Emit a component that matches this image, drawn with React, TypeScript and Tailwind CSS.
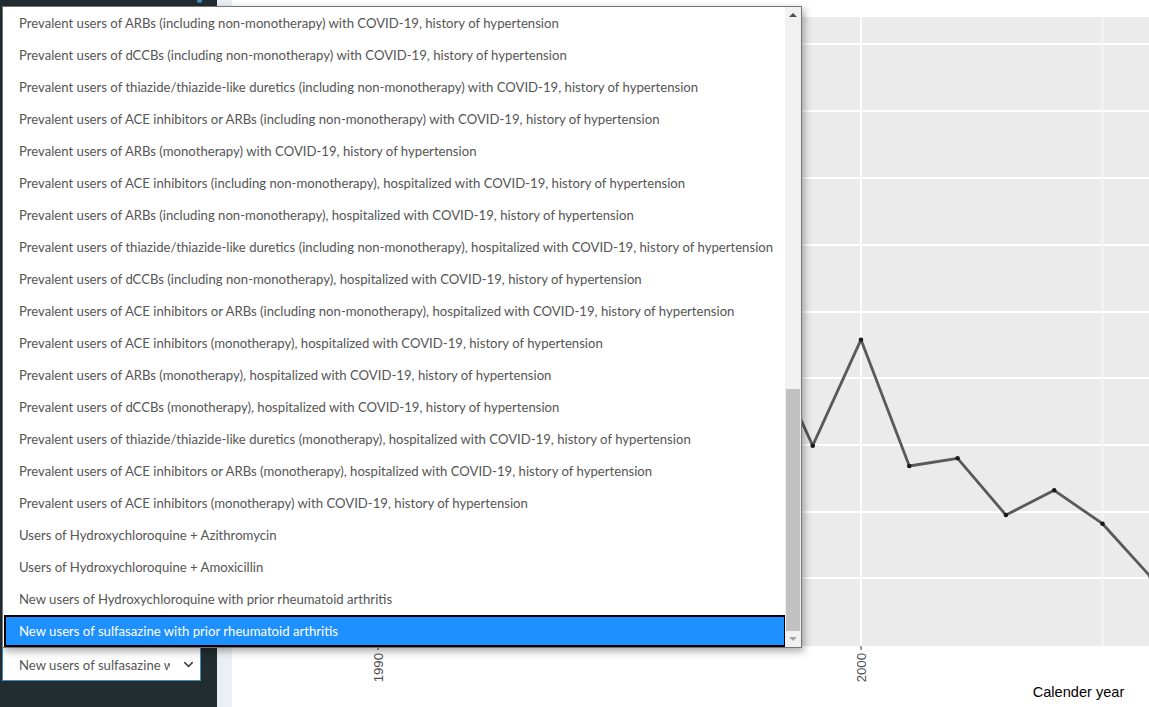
import { ChevronDown } from "lucide-react"

const options = [
  "Prevalent users of ARBs (including non-monotherapy) with COVID-19, history of hypertension",
  "Prevalent users of dCCBs (including non-monotherapy) with COVID-19, history of hypertension",
  "Prevalent users of thiazide/thiazide-like duretics (including non-monotherapy) with COVID-19, history of hypertension",
  "Prevalent users of ACE inhibitors or ARBs (including non-monotherapy) with COVID-19, history of hypertension",
  "Prevalent users of ARBs (monotherapy) with COVID-19, history of hypertension",
  "Prevalent users of ACE inhibitors (including non-monotherapy), hospitalized with COVID-19, history of hypertension",
  "Prevalent users of ARBs (including non-monotherapy), hospitalized with COVID-19, history of hypertension",
  "Prevalent users of thiazide/thiazide-like duretics (including non-monotherapy), hospitalized with COVID-19, history of hypertension",
  "Prevalent users of dCCBs (including non-monotherapy), hospitalized with COVID-19, history of hypertension",
  "Prevalent users of ACE inhibitors or ARBs (including non-monotherapy), hospitalized with COVID-19, history of hypertension",
  "Prevalent users of ACE inhibitors (monotherapy), hospitalized with COVID-19, history of hypertension",
  "Prevalent users of ARBs (monotherapy), hospitalized with COVID-19, history of hypertension",
  "Prevalent users of dCCBs (monotherapy), hospitalized with COVID-19, history of hypertension",
  "Prevalent users of thiazide/thiazide-like duretics (monotherapy), hospitalized with COVID-19, history of hypertension",
  "Prevalent users of ACE inhibitors or ARBs (monotherapy), hospitalized with COVID-19, history of hypertension",
  "Prevalent users of ACE inhibitors (monotherapy) with COVID-19, history of hypertension",
  "Users of Hydroxychloroquine + Azithromycin",
  "Users of Hydroxychloroquine + Amoxicillin",
  "New users of Hydroxychloroquine with prior rheumatoid arthritis",
  "New users of sulfasazine with prior rheumatoid arthritis",
]

// yearly values in page px (y) - only 1998 onward is actually visible
const series: [number, number][] = [
  [1990, 520], [1991, 470], [1992, 430], [1993, 455], [1994, 400], [1995, 380],
  [1996, 360], [1997, 395], [1998, 340], [1999, 445.7], [2000, 339.7], [2001, 466],
  [2002, 458.3], [2003, 515], [2004, 490.3], [2005, 523.7], [2006, 577],
]

const xOf = (year: number) => 861 + (year - 2000) * 48.3

function Chart() {
  const hLines = [44, 111, 178, 245, 312, 378, 445, 512, 578]
  const pts = series.map(([yr, y]) => `${xOf(yr)},${y}`).join(" ")
  return (
    <svg width="917" height="707" viewBox="232 0 917 707" className="block">
      <rect x="300" y="17" width="849" height="629" fill="#ebebeb" />
      {hLines.map((y) => (
        <line key={y} x1="300" x2="1149" y1={y} y2={y} stroke="#ffffff" strokeWidth="2" />
      ))}
      <line x1="619.5" x2="619.5" y1="17" y2="646" stroke="#f5f5f5" strokeWidth="2" />
      <line x1="1102.5" x2="1102.5" y1="17" y2="646" stroke="#f5f5f5" strokeWidth="2" />
      <line x1="378" x2="378" y1="17" y2="646" stroke="#ffffff" strokeWidth="2" />
      <line x1="861" x2="861" y1="17" y2="646" stroke="#ffffff" strokeWidth="2" />
      <polyline points={pts} fill="none" stroke="#595959" strokeWidth="2.8" strokeLinejoin="round" />
      {series.map(([yr, y]) => (
        <circle key={yr} cx={xOf(yr)} cy={y} r="2.3" fill="#1a1a1a" />
      ))}
      {[1990, 2000].map((yr) => (
        <g key={yr}>
          <line x1={xOf(yr)} x2={xOf(yr)} y1="646" y2="650" stroke="#333333" strokeWidth="1" />
          <text
            x={xOf(yr)}
            y="653"
            transform={`rotate(-90 ${xOf(yr)} 653)`}
            textAnchor="end"
            dominantBaseline="central"
            fontSize="13.2"
            fill="#4d4d4d"
            fontFamily="'Liberation Sans', Arial, sans-serif"
          >
            {yr}
          </text>
        </g>
      ))}
      <text x="1078.5" y="697" textAnchor="middle" fontSize="14.6" fill="#000000" fontFamily="'Liberation Sans', Arial, sans-serif">
        Calender year
      </text>
    </svg>
  )
}

function Listbox() {
  return (
    <div className="absolute left-[2px] top-[6px] w-[800px] h-[642px] flex bg-white border border-[#767676] shadow-[2px_3px_8px_rgba(0,0,0,0.35)]">
      <div className="flex-1 overflow-hidden">
        {options.map((opt, i) => {
          const selected = i === options.length - 1
          return (
            <div
              key={opt}
              className={
                selected
                  ? "h-[32px] flex items-center pt-[2px] pl-[13px] ml-px mr-[-1px] whitespace-nowrap bg-[#1e90ff] text-white border-2 border-black"
                  : "h-[32px] flex items-center pt-[2px] pl-[16px] whitespace-nowrap text-[#555555]"
              }
            >
              {opt}
            </div>
          )
        })}
      </div>
      <div className="w-[16px] bg-[#f1f1f1] flex flex-col items-center">
        <div className="h-[16px] flex items-center justify-center">
          <div className="w-0 h-0 border-l-[4px] border-r-[4px] border-b-[4px] border-l-transparent border-r-transparent border-b-[#505050]" />
        </div>
        <div className="flex-1 w-full flex flex-col justify-end px-[1px]">
          <div className="h-[242px] bg-[#c1c1c1]" />
        </div>
        <div className="h-[16px] flex items-center justify-center">
          <div className="w-0 h-0 border-l-[4px] border-r-[4px] border-t-[4px] border-l-transparent border-r-transparent border-t-[#a3a3a3]" />
        </div>
      </div>
    </div>
  )
}

export default function App() {
  return (
    <div className="relative w-[1149px] h-[707px] overflow-hidden flex font-['Lato',sans-serif] text-[13.15px]">
      <aside className="w-[217px] shrink-0 bg-[#222d32] flex flex-col justify-between pb-[26px] pl-[2px] pr-[16px]">
        <div className="self-end w-[5px] h-[3px] mr-[-1px] bg-[#3c8dbc] rounded-b-sm" />
        <div className="h-[34px] bg-white border border-[#3c8dbc] flex items-center pt-[3px] pl-[16px] pr-[4px] text-[#555555]">
          <span className="flex-1 overflow-hidden whitespace-nowrap">New users of sulfasazine with prior rheumatoid arthritis</span>
          <ChevronDown size={15} strokeWidth={2.5} className="ml-[11px] mb-[2px] text-[#444444]" />
        </div>
      </aside>
      <main className="flex-1 bg-[#ecf0f5] pl-[15px]">
        <div className="h-full bg-white">
          <Chart />
        </div>
      </main>
      <Listbox />
    </div>
  )
}
